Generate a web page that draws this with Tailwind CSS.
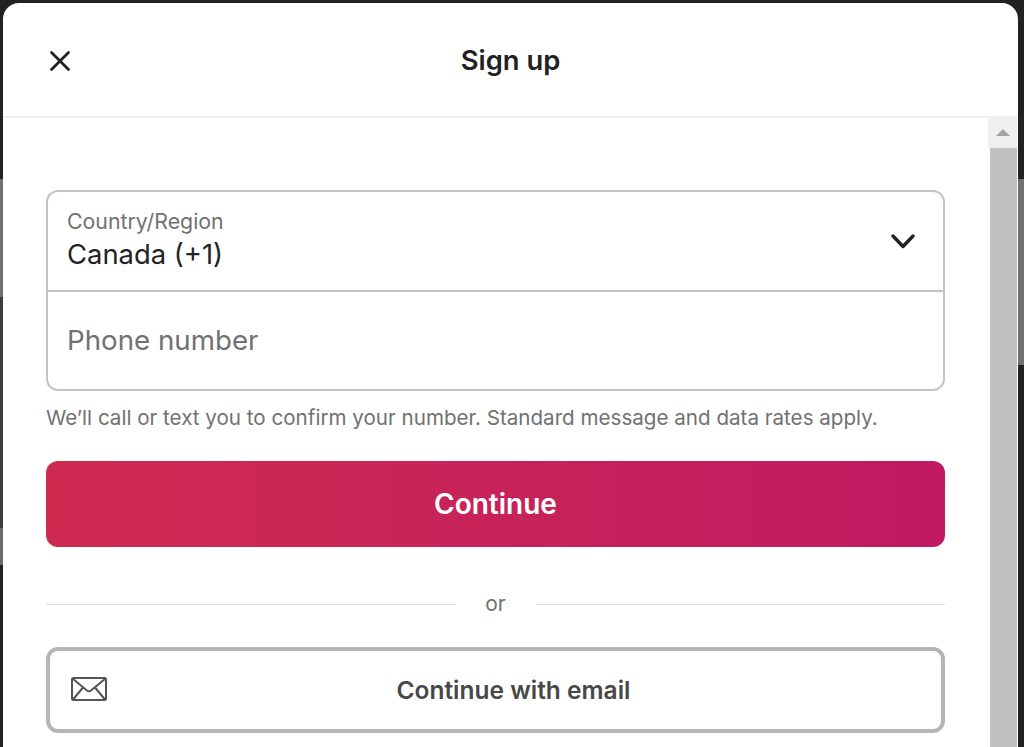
<!DOCTYPE html>
<html>

<head>
  <script src="https://cdn.jsdelivr.net/npm/@tailwindcss/browser@4"></script>
  <title>Sign up</title>
</head>

<body class="h-[747px] overflow-hidden bg-[#222222] font-['Inter','Noto_Sans',sans-serif]">
  <div class="relative h-[747px]">
    <!-- page dimmed behind the modal -->
    <div class="absolute left-0 right-0 top-[179px] h-[118px] bg-[#707070]"></div>
    <div class="absolute left-0 w-[3px] top-[297px] h-[231px] bg-[#3c3c3c]"></div>
    <div class="absolute left-0 w-[3px] top-[528px] h-[37px] bg-[#6a6a6a]"></div>
    <div class="absolute right-0 w-[6px] top-[297px] h-[68px] bg-[#707070]"></div>

    <div class="absolute left-[3px] top-[3px] w-[1015px] h-[744px] bg-white rounded-t-[16px] flex flex-col overflow-hidden">
      <header class="relative h-[115px] shrink-0 flex items-center justify-center border-b-2 border-[#f0f0f0]">
        <svg class="absolute left-[46px] top-[47px]" width="22" height="22" viewBox="0 0 22 22" fill="none" stroke="#222222" stroke-width="2.8" stroke-linecap="round">
          <path d="M2.5 2.5L19.5 19.5M19.5 2.5L2.5 19.5" />
        </svg>
        <h1 class="text-[27.4px] font-semibold text-[#222222] leading-8">Sign up</h1>
      </header>

      <div class="flex flex-1 min-h-0">
        <main class="flex-1 pl-[43px] pr-[43px] pt-[72px]">
          <div class="rounded-[12px] border-2 border-[#c4c4c4]">
            <div class="relative h-[100px] border-b-2 border-[#c4c4c4] pl-[19px] pt-[17px]">
              <div class="text-[21.3px] leading-6 text-[#717171]">Country/Region</div>
              <div class="text-[27.4px] leading-[42px] text-[#222222]">Canada (+1)</div>
              <svg class="absolute right-[28px] top-[42px]" width="24" height="15" viewBox="0 0 24 15" fill="none" stroke="#222222" stroke-width="3.4" stroke-linecap="round" stroke-linejoin="round">
                <path d="M2 2L12 12.5L22 2" />
              </svg>
            </div>
            <div class="h-[97px] pl-[19px] flex items-center text-[27.7px] text-[#717171]">Phone number</div>
          </div>

          <p class="mt-[15px] text-[20.6px] leading-6 text-[#717171]">We’ll call or text you to confirm your number. Standard message and data rates apply.</p>

          <button class="mt-[31px] w-full h-[86px] rounded-[12px] bg-gradient-to-r from-[#cf2a50] to-[#bf1a62] text-white text-[28px] font-semibold">Continue</button>

          <div class="mt-[45px] flex items-center">
            <div class="flex-1 h-px bg-[#dddddd]"></div>
            <span class="w-[80px] text-center text-[21px] leading-6 text-[#717171]">or</span>
            <div class="flex-1 h-px bg-[#dddddd]"></div>
          </div>

          <button class="relative mt-[31px] w-full h-[86px] rounded-[12px] border-4 border-[#b5b5b5] flex items-center justify-center pl-[36px] text-[24.5px] font-semibold text-[#484848]">
            <svg class="absolute left-[21px] top-[26px]" width="36" height="24" viewBox="0 0 36 24" fill="none" stroke="#555555" stroke-width="2" stroke-linejoin="round">
              <rect x="1" y="1" width="34" height="22" rx="1.5" />
              <path d="M1.5 1.5L16 13.5Q18 15 20 13.5L34.5 1.5M12 10.5L2 22.5M24 10.5L34 22.5" />
            </svg>
            Continue with email
          </button>
        </main>

        <!-- scrollbar -->
        <div class="w-[30px] -mt-[2px] shrink-0 flex flex-col relative">
          <div class="h-[32px] mr-[1px] bg-[#f0f0f0] flex items-center justify-center">
            <div class="w-0 h-0 border-x-[7px] border-x-transparent border-b-[7px] border-b-[#a3a3a3]"></div>
          </div>
          <div class="flex-1 ml-[2px] mr-[1px] bg-[#c1c1c1]"></div>
        </div>
      </div>
    </div>
  </div>
</body>

</html>
